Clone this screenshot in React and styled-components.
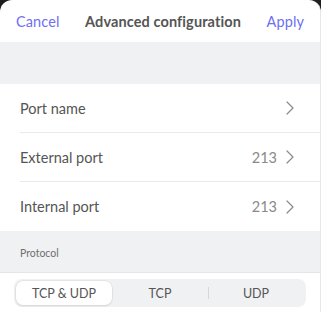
import React, { useState } from "react";
import styled, { createGlobalStyle } from "styled-components";

const Global = createGlobalStyle`
  html, body { margin: 0; padding: 0; background: #1e1e20; }
  body { font-family: Lato, "Noto Sans", sans-serif; }
  * { box-sizing: border-box; }
`;

const Sheet = styled.div`
  width: 321px;
  height: 312px;
  background: #fff;
  border-radius: 12px 12px 0 0;
  overflow: hidden;
  display: flex;
  flex-direction: column;
  border-right: 1px solid #e6e7ea;
`;

const Header = styled.div`
  height: 42px;
  display: flex;
  align-items: center;
  justify-content: space-between;
  padding: 0 16px 0 16px;
  flex-shrink: 0;
`;

const HeaderButton = styled.button`
  border: none;
  background: none;
  padding: 0;
  font-family: inherit;
  font-size: 14.5px;
  letter-spacing: 0.1px;
  color: #6e6ff3;
  cursor: pointer;
`;

const Title = styled.div`
  font-size: 14.5px;
  font-weight: 700;
  letter-spacing: 0.1px;
  color: #555;
`;

const Band = styled.div`
  background: #f0f1f3;
  height: ${(p) => p.$h}px;
  flex-shrink: 0;
  display: flex;
  align-items: center;
  padding: 3px 20px 0 20px;
  font-size: 10.5px;
  color: #6f6f6f;
  border-bottom: ${(p) => (p.$line ? "1px solid #e4e5e8" : "none")};
`;

const List = styled.div`
  padding-left: 20px;
`;

const Row = styled.div`
  height: 49px;
  display: flex;
  align-items: center;
  padding-right: 26px;
  border-bottom: ${(p) => (p.$last ? "none" : "1px solid #e8e9ec")};
`;

const Label = styled.div`
  flex: 1;
  font-size: 14.5px;
  color: #555;
`;

const Value = styled.div`
  font-size: 14.5px;
  color: #8a8a8a;
  margin-right: 9px;
`;

const Chevron = () => (
  <svg width="8" height="14" viewBox="0 0 8 14" fill="none">
    <path d="M1 1l6 6-6 6" stroke="#8a8a8a" strokeWidth="1.2" strokeLinecap="round" strokeLinejoin="round" />
  </svg>
);

const SegmentWrap = styled.div`
  padding: 6px 14px 0 14px;
`;

const Segments = styled.div`
  display: flex;
  height: 28px;
  background: #f0f1f3;
  border-radius: 8px;
  padding: 2px;
`;

const Segment = styled.button`
  flex: 1;
  border: none;
  font-family: inherit;
  font-size: 12.5px;
  color: #555;
  background: ${(p) => (p.$active ? "#fff" : "transparent")};
  border-radius: 7px;
  box-shadow: ${(p) => (p.$active ? "0 0 0 0.5px #d8d9dc, 0 1px 2px rgba(0,0,0,0.12)" : "none")};
  position: relative;
  padding: 0;
  &::before {
    content: "";
    display: ${(p) => (p.$divider ? "block" : "none")};
    position: absolute;
    left: 0;
    top: 6px;
    bottom: 6px;
    width: 1px;
    background: #d6d7da;
  }
`;

const rows = [
  { label: "Port name" },
  { label: "External port", value: "213" },
  { label: "Internal port", value: "213" },
];

const protocols = ["TCP & UDP", "TCP", "UDP"];

export default function App() {
  const [active, setActive] = useState(0);
  return (
    <>
      <Global />
      <Sheet>
        <Header>
          <HeaderButton>Cancel</HeaderButton>
          <Title>Advanced configuration</Title>
          <HeaderButton>Apply</HeaderButton>
        </Header>
        <Band $h={42} />
        <List>
          {rows.map((r, i) => (
            <Row key={r.label} $last={i === rows.length - 1}>
              <Label>{r.label}</Label>
              {r.value && <Value>{r.value}</Value>}
              <Chevron />
            </Row>
          ))}
        </List>
        <Band $h={42} $line>Protocol</Band>
        <SegmentWrap>
          <Segments>
            {protocols.map((p, i) => (
              <Segment
                key={p}
                $active={i === active}
                $divider={i > 0 && i !== active && i - 1 !== active}
                onClick={() => setActive(i)}
              >
                {p}
              </Segment>
            ))}
          </Segments>
        </SegmentWrap>
      </Sheet>
    </>
  );
}
